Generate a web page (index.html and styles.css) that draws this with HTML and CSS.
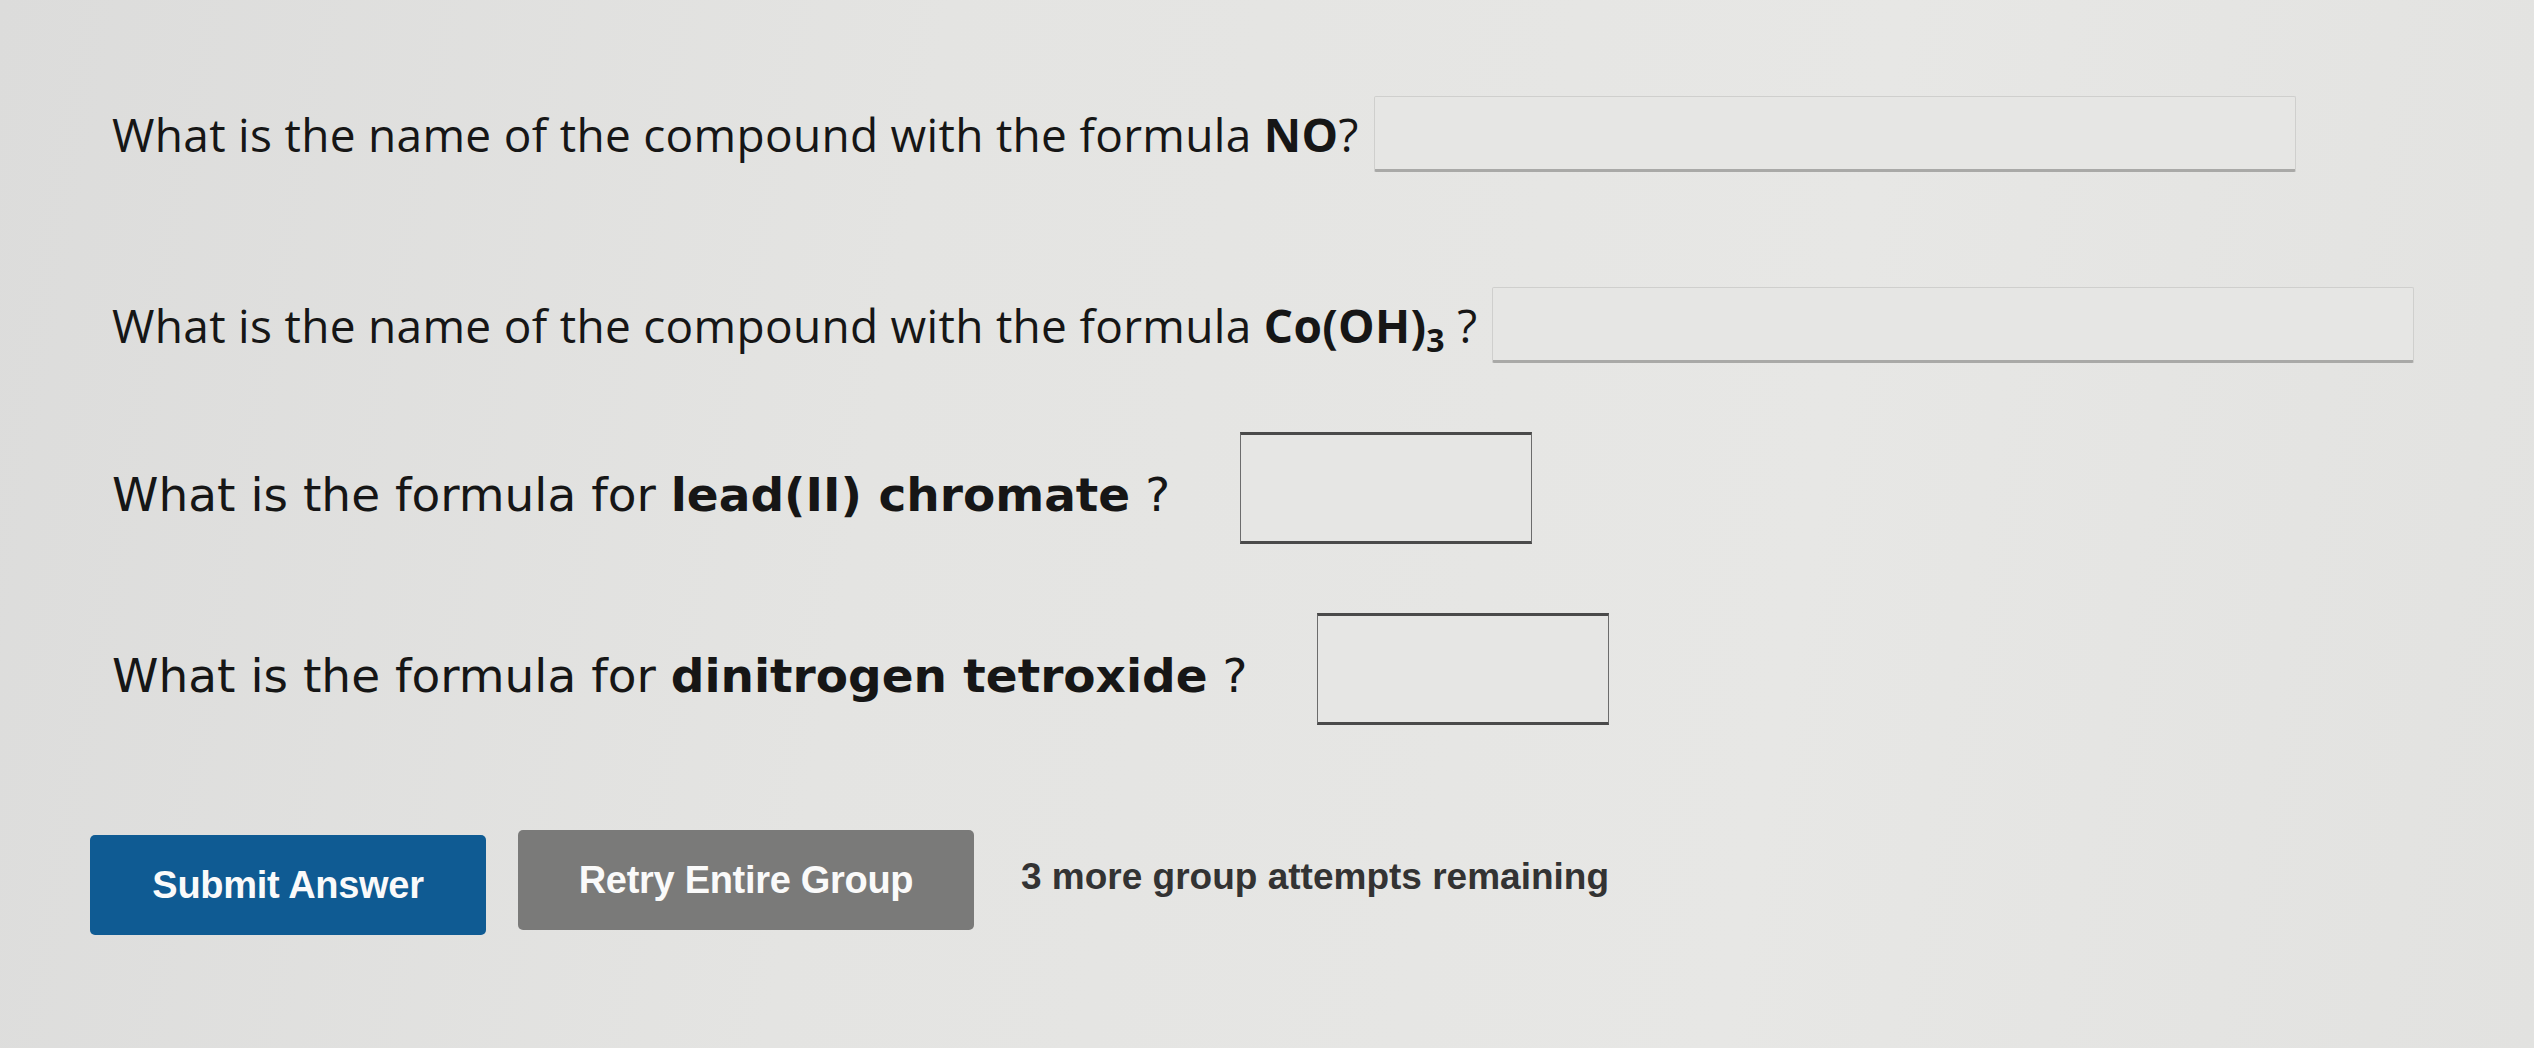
FILE: index.html
```html
<!DOCTYPE html>
<html lang="en">
<head>
  <meta charset="UTF-8" />
  <title>Question Group</title>
  <link rel="stylesheet" href="styles.css">
</head>
<body>
  <div class="group">
    <div class="question q-name first">
      <span class="prompt">What is the name of the compound with the formula <b>NO</b>?</span>
      <input class="answer wide" type="text">
    </div>

    <div class="question q-name second">
      <span class="prompt">What is the name of the compound with the formula <b>Co(OH)<sub>3</sub></b> ?</span>
      <input class="answer wide" type="text">
    </div>

    <div class="question q-formula">
      <span class="prompt">What is the formula for <b>lead(II) chromate</b> ?</span>
      <div class="answer box"></div>
    </div>

    <div class="question q-formula">
      <span class="prompt">What is the formula for <b>dinitrogen tetroxide</b> ?</span>
      <div class="answer box"></div>
    </div>

    <div class="actions">
      <button class="btn submit">Submit Answer</button>
      <button class="btn retry">Retry Entire Group</button>
      <span class="attempts">3 more group attempts remaining</span>
    </div>
  </div>
</body>
</html>
```

FILE: styles.css
```css
html, body {
  height: 100%;
}
body {
  margin: 0;
  background: linear-gradient(100deg, #dcdcdb 0%, #e4e4e2 35%, #e7e7e5 70%, #e2e2e0 100%);
  color: #161616;
  overflow: hidden;
}
.group {
  display: flex;
  flex-direction: column;
  align-items: flex-start;
  padding: 96px 0 0 112px;
}
.question {
  display: flex;
  align-items: center;
}
.q-name {
  font-family: "Open Sans", sans-serif;
  font-size: 46px;
  letter-spacing: 0.3px;
  gap: 15px;
}
.q-name b {
  font-weight: 700;
}
.q-name sub {
  font-size: 32px;
  vertical-align: -9px;
  line-height: 0;
}
.second {
  margin-top: 115px;
}
.q-formula {
  font-family: "DejaVu Sans", Verdana, sans-serif;
  font-size: 47px;
  gap: 70px;
  margin-top: 69px;
}
.q-formula .prompt {
  padding-top: 12px;
}
.answer {
  box-sizing: border-box;
  background: #e6e6e4;
}
.wide {
  width: 922px;
  height: 76px;
  border: 1px solid #cfcfcd;
  border-bottom: 3px solid #a9a9a7;
  border-radius: 2px;
  font-size: 30px;
  padding: 0 12px;
  outline: none;
}
.box {
  width: 292px;
  height: 112px;
  border: 1px solid #6c6c6c;
  border-top: 3px solid #4a4a4a;
  border-bottom: 3px solid #4a4a4a;
}
.actions {
  display: flex;
  align-items: center;
  margin-top: 106px;
  margin-left: -22px;
  font-family: "Liberation Sans", Arial, sans-serif;
  font-weight: 700;
}
.btn {
  height: 100px;
  padding: 0 60px;
  border: none;
  border-radius: 5px;
  color: #fafafa;
  font-family: inherit;
  font-weight: 700;
  font-size: 38px;
  letter-spacing: -0.3px;
}
.submit {
  background: #0f5b93;
  width: 396px;
  margin-top: 4px;
}
.retry {
  background: #7a7a79;
  width: 456px;
  margin-left: 32px;
  margin-top: -6px;
}
.attempts {
  margin-left: 47px;
  margin-top: -12px;
  font-size: 37px;
  color: #333;
}
```
